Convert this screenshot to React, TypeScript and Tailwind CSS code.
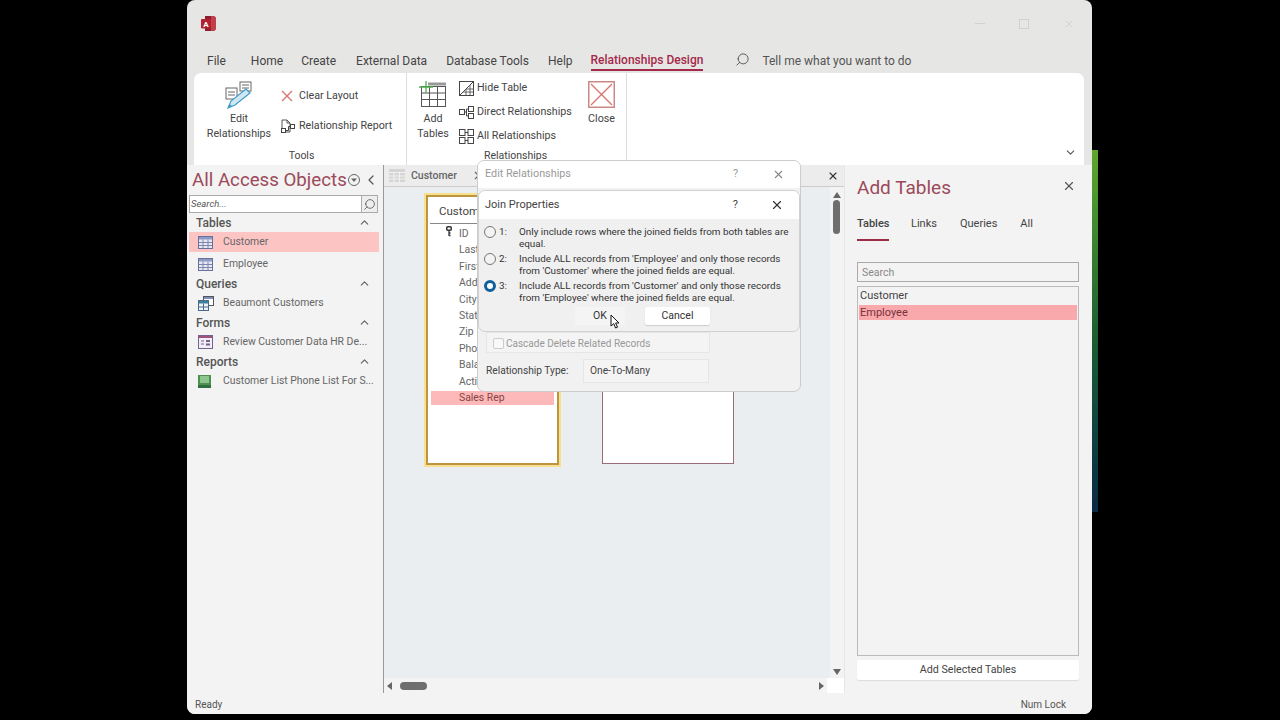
import { ChevronUp, ChevronDown, ChevronLeft, Search, X } from "lucide-react";

const menus = [
  { label: "File", className: "ml-[20px]" },
  { label: "Home", className: "ml-[25px]" },
  { label: "Create", className: "ml-[18px]" },
  { label: "External Data", className: "ml-[20px]" },
  { label: "Database Tools", className: "ml-[19px]" },
  { label: "Help", className: "ml-[19px]" },
];

const fields = ["ID", "Last Name", "First Name", "Address", "City", "State", "Zip", "Phone", "Balance", "Active"];

function AccessLogo() {
  return (
    <svg width="17" height="17" viewBox="0 0 17 17">
      <path d="M5 1h9l2 2v11l-2 2H5z" fill="#8f1d2c" />
      <path d="M11 1h3l2 2v11l-2 2h-3z" fill="#c0404c" />
      <rect x="1" y="4" width="10" height="9.5" rx="1" fill="#b3202f" />
      <text x="6" y="11.5" textAnchor="middle" fontSize="8" fontWeight="700" fill="#fff">A</text>
    </svg>
  );
}

function TableIcon() {
  return (
    <svg width="15" height="13" viewBox="0 0 15 13" fill="none">
      <rect x="0.5" y="0.5" width="14" height="12" fill="#e6e9f4" stroke="#66709a" />
      <rect x="1" y="1" width="13" height="2.5" fill="#8f9ac4" />
      <path d="M5 3.5v9M10 3.5v9M1 6.5h13M1 9.5h13" stroke="#7d87ad" />
    </svg>
  );
}

function QueryIcon() {
  return (
    <svg width="16" height="15" viewBox="0 0 16 15" fill="none">
      <rect x="5.5" y="0.5" width="10" height="9" fill="#fff" stroke="#555" />
      <rect x="6" y="1" width="9" height="2" fill="#7f8fbd" />
      <rect x="0.5" y="4.5" width="10" height="10" fill="#eef1f6" stroke="#4a6a8c" />
      <rect x="1" y="5" width="9" height="2.5" fill="#3f7f9c" />
      <path d="M5.5 7.5v7M1 11h9" stroke="#4a6a8c" />
    </svg>
  );
}

function FormIcon() {
  return (
    <svg width="15" height="14" viewBox="0 0 15 14" fill="none">
      <rect x="0.5" y="0.5" width="14" height="13" fill="#f1eef6" stroke="#76608f" />
      <rect x="1" y="1" width="13" height="2" fill="#a0527a" />
      <path d="M3 6h3M3 9h3" stroke="#76608f" />
      <rect x="8" y="5" width="4" height="2" fill="#76608f" />
      <rect x="8" y="8.5" width="4" height="2" fill="#76608f" />
    </svg>
  );
}

function ReportIcon() {
  return (
    <svg width="13" height="13" viewBox="0 0 13 13">
      <rect width="13" height="13" fill="#4f8f4f" />
      <rect x="2" y="1" width="9" height="7" fill="#8cc68c" />
      <rect x="0" y="10" width="13" height="3" fill="#2f6f3f" />
    </svg>
  );
}

function EditRelationshipsIcon() {
  return (
    <svg width="29" height="28" viewBox="0 0 29 28" fill="none">
      <rect x="1" y="7" width="11" height="11" fill="#fff" stroke="#666" />
      <path d="M3 11h7M3 14h7" stroke="#666" />
      <rect x="15" y="1" width="11" height="9" fill="#fff" stroke="#666" />
      <path d="M17 4h7M17 7h7" stroke="#666" />
      <path d="M3 27l3-7L21 8l4 4L10 24z" fill="#cfe6f3" stroke="#3f9ac8" strokeWidth="1.2" />
      <path d="M3 27l1.5-4 2.5 2z" fill="#3f9ac8" />
    </svg>
  );
}

function ClearLayoutIcon() {
  return (
    <svg width="12" height="12" viewBox="0 0 12 12" fill="none">
      <path d="M1 1l10 10M11 1L1 11" stroke="#d9736f" strokeWidth="1.3" />
    </svg>
  );
}

function ReportSmallIcon() {
  return (
    <svg width="14" height="15" viewBox="0 0 14 15" fill="none">
      <path d="M1 1h5l3 3v9H1z" fill="#fff" stroke="#555" />
      <path d="M6 1v3h3" stroke="#555" />
      <rect x="0.5" y="9.5" width="4" height="4" fill="#fff" stroke="#444" />
      <rect x="9.5" y="5.5" width="4" height="4" fill="#fff" stroke="#444" />
      <path d="M4.5 11.5h3v-4h2" stroke="#444" />
    </svg>
  );
}

function AddTablesIcon() {
  return (
    <svg width="28" height="27" viewBox="0 0 28 27" fill="none">
      <rect x="2.5" y="5.5" width="24" height="20" fill="#fff" stroke="#555" />
      <rect x="9" y="1.5" width="18" height="3" fill="#999" />
      <path d="M2.5 12h24M2.5 18.5h24M10.5 5.5v20M18.5 5.5v20" stroke="#555" />
      <path d="M7 0v12M0 6h14" stroke="#4cae4c" strokeWidth="1.3" />
    </svg>
  );
}

function HideTableIcon() {
  return (
    <svg width="15" height="15" viewBox="0 0 15 15" fill="none">
      <rect x="0.5" y="0.5" width="14" height="14" fill="#fff" stroke="#444" />
      <path d="M1 14L14 1" stroke="#444" />
      <path d="M7 14V8M11 14V4M4 11h10M7 8h7" stroke="#666" />
    </svg>
  );
}

function DirectIcon() {
  return (
    <svg width="15" height="13" viewBox="0 0 15 13" fill="none">
      <rect x="0.5" y="3.5" width="5" height="5" stroke="#444" fill="#fff" />
      <rect x="9.5" y="0.5" width="5" height="5" stroke="#444" fill="#fff" />
      <rect x="9.5" y="7.5" width="5" height="5" stroke="#444" fill="#fff" />
      <path d="M5.5 6h2M7.5 3h2M7.5 10h2M7.5 3v7" stroke="#444" />
    </svg>
  );
}

function AllIcon() {
  return (
    <svg width="15" height="15" viewBox="0 0 15 15" fill="none">
      <rect x="0.5" y="0.5" width="5.5" height="6" stroke="#444" fill="#fff" />
      <rect x="9" y="0.5" width="5.5" height="6" stroke="#444" fill="#fff" />
      <rect x="0.5" y="8.5" width="5.5" height="6" stroke="#444" fill="#fff" />
      <rect x="9" y="8.5" width="5.5" height="6" stroke="#444" fill="#fff" />
      <path d="M6 3.5h3M6 11.5h3" stroke="#444" />
    </svg>
  );
}

function CloseBigIcon() {
  return (
    <svg width="27" height="27" viewBox="0 0 27 27" fill="none">
      <rect x="0.75" y="0.75" width="25.5" height="25.5" fill="#fff" stroke="#c98a86" strokeWidth="1.5" />
      <path d="M3 3l21 21M24 3L3 24" stroke="#d9736f" strokeWidth="1.3" />
    </svg>
  );
}

function KeyIcon() {
  return (
    <svg width="6" height="11" viewBox="0 0 6 11" fill="none">
      <rect x="0.75" y="0.75" width="4.5" height="3.5" rx="1" stroke="#333" strokeWidth="1.5" />
      <path d="M3 4v6M3 7h1.5M3 9.5h1.5" stroke="#333" strokeWidth="1.3" />
    </svg>
  );
}

function Cursor() {
  return (
    <svg width="10" height="15" viewBox="0 0 10 15">
      <path d="M1 1v11l2.7-2.4L5.6 14l1.9-.8-1.9-4.2H9z" fill="#fff" stroke="#111" strokeWidth="1" />
    </svg>
  );
}

function NavHeader({ label }: { label: string }) {
  return (
    <div className="h-[19px] flex items-center justify-between pl-[7px] pr-[8px] text-[12px] font-medium text-[#555]">
      <span>{label}</span>
      <ChevronUp size={13} strokeWidth={2.2} className="text-[#666]" />
    </div>
  );
}

function NavRow({ icon, label, active }: { icon: React.ReactNode; label: string; active?: boolean }) {
  return (
    <div className={`h-[20px] flex items-center pl-[9px] text-[10.4px] text-[#666] whitespace-nowrap ${active ? "bg-[#fdc4c4]" : ""}`}>
      <span className="w-[25px] flex shrink-0">{icon}</span>
      {label}
    </div>
  );
}

function Radio({ checked }: { checked?: boolean }) {
  if (checked) {
    return <span className="w-[12px] h-[12px] rounded-full border-[3px] border-[#0f5f9c] bg-white shrink-0" />;
  }
  return <span className="w-[12px] h-[12px] rounded-full border border-[#777] bg-[#f3f3f3] shrink-0" />;
}

function JoinOption({ n, checked, children }: { n: number; checked?: boolean; children: React.ReactNode }) {
  return (
    <div className="h-[27px] flex pl-[5px] text-[9.9px] leading-[12px] text-[#333]">
      <div className="w-[35px] shrink-0 flex items-start gap-[3px]">
        <Radio checked={checked} />
        <span>{n}:</span>
      </div>
      <div className="whitespace-nowrap">{children}</div>
    </div>
  );
}

function SmallAction({ icon, label }: { icon: React.ReactNode; label: string }) {
  return (
    <div className="h-[24px] flex items-center whitespace-nowrap">
      <span className="w-[18px] flex shrink-0">{icon}</span>
      {label}
    </div>
  );
}

export default function App() {
  return (
    <div
      className="w-[1280px] h-[720px] bg-black overflow-hidden flex items-start pl-[187px] relative text-[#333]"
      style={{ fontFamily: 'Roboto, "Noto Sans", sans-serif' }}
    >
      <div className="w-[905px] h-[714px] bg-[#e6e6e4] rounded-[8px] overflow-hidden flex flex-col relative">
        {/* title bar */}
        <div className="h-[44px] shrink-0 flex items-center justify-between pl-[13px] pr-[17px] pt-[3px]">
          <AccessLogo />
          <div className="flex items-center gap-[34px] text-[#d2d2d0]">
            <span className="w-[10px] h-px bg-[#d2d2d0]" />
            <span className="w-[10px] h-[10px] border border-[#d2d2d0]" />
            <X size={12} />
          </div>
        </div>
        {/* menu */}
        <div className="h-[29px] shrink-0 flex items-start text-[12px] text-[#444] whitespace-nowrap pt-[8px]">
          {menus.map((m) => (
            <span key={m.label} className={m.className}>{m.label}</span>
          ))}
          <span className="ml-[18px] font-medium text-[#a4294a] border-b-2 border-[#a4294a] h-[19px] leading-[16px]">
            Relationships Design
          </span>
          <Search size={15} strokeWidth={1.5} className="ml-[32px] text-[#555] -scale-x-100" />
          <span className="ml-[12px] text-[#555]">Tell me what you want to do</span>
        </div>
        {/* ribbon */}
        <div className="h-[92px] shrink-0 ml-[7px] mr-[8px] bg-white rounded-t-[7px] flex text-[10.7px] text-[#444] relative">
          <div className="w-[213px] border-r border-[#ddd] flex flex-col shrink-0">
            <div className="flex h-[72px]">
              <div className="w-[90px] flex flex-col items-center pt-[8px] leading-[15px] text-center">
                <EditRelationshipsIcon />
                <span className="mt-[2px]">Edit<br />Relationships</span>
              </div>
              <div className="pt-[11px] flex flex-col gap-[6px] -ml-[3px]">
                <SmallAction icon={<ClearLayoutIcon />} label="Clear Layout" />
                <SmallAction icon={<ReportSmallIcon />} label="Relationship Report" />
              </div>
            </div>
            <div className="h-[20px] text-center text-[10.5px] leading-[16px] pl-[3px] pt-[3px]">Tools</div>
          </div>
          <div className="w-[220px] border-r border-[#ddd] flex flex-col shrink-0">
            <div className="flex h-[72px]">
              <div className="w-[52px] flex flex-col items-center pt-[8px] leading-[15px] text-center">
                <AddTablesIcon />
                <span className="mt-[3px]">Add<br />Tables</span>
              </div>
              <div className="pt-[3px] w-[129px]">
                <SmallAction icon={<HideTableIcon />} label="Hide Table" />
                <SmallAction icon={<DirectIcon />} label="Direct Relationships" />
                <SmallAction icon={<AllIcon />} label="All Relationships" />
              </div>
              <div className="flex flex-col items-center pt-[8px] leading-[15px]">
                <CloseBigIcon />
                <span className="mt-[3px]">Close</span>
              </div>
            </div>
            <div className="h-[20px] text-center text-[10.5px] leading-[16px] pr-[2px] pt-[3px]">Relationships</div>
          </div>
          <ChevronDown size={13} strokeWidth={2} className="absolute right-[7px] bottom-[6px] text-[#555]" />
        </div>
        {/* body */}
        <div className="flex-1 flex min-h-0 bg-[#f3f3f3]">
          <div className="w-[197px] shrink-0 border-r border-[#999] pl-[2px] pr-[4px]">
            <div className="h-[30px] flex items-center pl-[3px] whitespace-nowrap">
              <span className="text-[18.7px] text-[#9c4a5a] w-[154px] leading-none">All Access Objects</span>
              <svg width="14" height="14" viewBox="0 0 14 14" fill="none" className="ml-px">
                <circle cx="7" cy="7" r="5.5" stroke="#666" />
                <path d="M4 5.5h6L7 9z" fill="#666" />
              </svg>
              <ChevronLeft size={16} strokeWidth={1.8} className="ml-[2px] text-[#555]" />
            </div>
            <div className="h-[18px] flex border border-[#aaa] bg-white w-[189px]">
              <span className="flex-1 text-[9.5px] italic text-[#555] leading-[16px] pl-px">Search...</span>
              <span className="w-[16px] bg-[#eee] border-l border-[#aaa] flex items-center justify-center">
                <Search size={13} strokeWidth={1.5} className="text-[#555] -scale-x-100" />
              </span>
            </div>
            <NavHeader label="Tables" />
            <NavRow icon={<TableIcon />} label="Customer" active />
            <div className="h-[2px]" />
            <NavRow icon={<TableIcon />} label="Employee" />
            <NavHeader label="Queries" />
            <NavRow icon={<QueryIcon />} label="Beaumont Customers" />
            <NavHeader label="Forms" />
            <NavRow icon={<FormIcon />} label="Review Customer Data HR De..." />
            <NavHeader label="Reports" />
            <NavRow icon={<ReportIcon />} label="Customer List Phone List For S..." />
          </div>
          {/* document area */}
          <div className="w-[460px] shrink-0 flex flex-col">
            <div className="h-[22px] shrink-0 flex items-center bg-[#ececec] border-b border-[#ccc] text-[10.5px] text-[#666] relative">
              <svg width="16" height="13" viewBox="0 0 16 13" className="ml-[5px]">
                <rect width="16" height="13" fill="#d5d5d5" />
                <path d="M0 3.5h16M0 7h16M0 10h16M5 3.5V13M10.5 3.5V13" stroke="#f2f2f2" />
              </svg>
              <span className="ml-[6px] font-medium pt-px">Customer</span>
              <X size={13} className="ml-[15px]" />
              <X size={12} strokeWidth={2.2} className="absolute right-[5px] text-[#333]" />
            </div>
            <div className="flex-1 flex min-h-0">
              <div className="w-[446px] shrink-0 bg-[#eaeef1] relative">
                <div className="absolute left-[42px] top-[8px] w-[133px] h-[270px] bg-white border-2 border-[#bb9540] shadow-[0_0_0_2px_#f9e08f] pt-[3px]">
                  <div className="h-[24px] mx-[2px] pl-[9px] border-b border-[#888] text-[11.5px] leading-[22px] text-[#444]">Customer</div>
                  <div className="pt-[2px] text-[10.4px] text-[#666]">
                    {fields.map((f) => (
                      <div key={f} className="h-[16.4px] pl-[31px] leading-[16px] relative">
                        {f === "ID" && (
                          <span className="absolute left-[18px] top-0"><KeyIcon /></span>
                        )}
                        {f}
                      </div>
                    ))}
                    <div className="h-[14px] mt-px mx-[3px] pl-[28px] bg-[#fdb9b9] leading-[14px] text-[#844]">Sales Rep</div>
                  </div>
                </div>
                <div className="absolute left-[218px] top-[8px] w-[132px] h-[269px] bg-white border border-[#9c6a78]" />
              </div>
              <div className="w-[13px] shrink-0 bg-[#f3f3f3] flex flex-col items-center pt-[5px] pb-[3px]">
                <span className="w-0 h-0 border-x-[4px] border-x-transparent border-b-[6px] border-b-[#666]" />
                <span className="w-[7px] h-[34px] mt-[2px] rounded-full bg-[#6e6e6e]" />
                <span className="flex-1" />
                <span className="w-0 h-0 border-x-[4px] border-x-transparent border-t-[6px] border-t-[#666]" />
              </div>
            </div>
            <div className="h-[15px] shrink-0 flex items-center bg-[#f3f3f3]">
              <span className="ml-[3px] w-0 h-0 border-y-[4px] border-y-transparent border-r-[5px] border-r-[#666]" />
              <span className="ml-[8px] w-[27px] h-[8px] rounded-full bg-[#6e6e6e]" />
              <span className="flex-1" />
              <span className="mr-[3px] w-0 h-0 border-y-[4px] border-y-transparent border-l-[5px] border-l-[#666]" />
              <span className="w-[17px] h-[15px] bg-white" />
            </div>
          </div>
          {/* add tables pane */}
          <div className="flex-1 border-l border-[#e6e6e6] pl-[12px] pr-[13px] flex flex-col relative">
            <div className="h-[47px] flex items-center text-[19px] text-[#9c4a5a]">Add Tables</div>
            <X size={14} strokeWidth={2} className="absolute right-[16px] top-[14px] text-[#555]" />
            <div className="h-[26px] flex items-start text-[11px] text-[#444] pt-[4px]">
              <span className="w-[32px] h-[25px] text-center border-b-2 border-[#9b2d45] font-medium">Tables</span>
              <span className="ml-[22px]">Links</span>
              <span className="ml-[23px]">Queries</span>
              <span className="ml-[23px]">All</span>
            </div>
            <div className="h-[20px] mt-[24px] border border-[#aaa] text-[10.5px] text-[#888] leading-[19px] pl-[4px]">Search</div>
            <div className="h-[370px] mt-[4px] border border-[#bbb] pt-px px-px text-[11px] text-[#444] leading-[15px]">
              <div className="h-[16px] pl-px">Customer</div>
              <div className="h-[15px] mt-px pl-px bg-[#f9a8ac] text-[#7a2f3a]">Employee</div>
            </div>
            <div className="h-[20px] mt-[4px] bg-white rounded-[2px] text-center text-[10.7px] leading-[20px] text-[#444] shadow-[0_1px_1px_#ddd]">
              Add Selected Tables
            </div>
          </div>
        </div>
        {/* status bar */}
        <div className="h-[21px] shrink-0 bg-[#f3f3f3] flex items-center justify-between pl-[8px] pr-[26px] pt-px text-[10px] text-[#555]">
          <span>Ready</span>
          <span>Num Lock</span>
        </div>

        {/* Edit Relationships dialog */}
        <div className="absolute left-[290px] top-[160px] w-[324px] h-[232px] bg-[#f1f1f1] rounded-[7px] border border-[#ccc] overflow-hidden text-[10.2px]">
          <div className="h-[27px] bg-white flex items-center pl-[7px] text-[10.8px] text-[#999]">
            <span className="flex-1">Edit Relationships</span>
            <span className="mr-[34px]">?</span>
            <X size={13} className="mr-[15px] text-[#888]" />
          </div>
          <div className="mt-[144px] ml-[8px] w-[224px] h-[21px] flex items-center bg-[#f4f4f4] border border-[#e6e6e6] text-[#999] text-[10px] pt-px">
            <span className="ml-[6px] mr-[2px] w-[11px] h-[11px] border border-[#ccc] rounded-[2px] bg-[#f8f8f8]" />
            Cascade Delete Related Records
          </div>
          <div className="mt-[6px] ml-[8px] h-[24px] flex items-center text-[#444]">
            <span className="w-[97px]">Relationship Type:</span>
            <span className="w-[126px] h-[24px] pl-[6px] leading-[22px] bg-[#f4f4f4] border border-[#e6e6e6]">One-To-Many</span>
          </div>
        </div>

        {/* Join Properties dialog */}
        <div className="absolute left-[291px] top-[190px] w-[322px] h-[142px] bg-[#f0f0f0] rounded-[7px] border border-[#d0d0d0] overflow-hidden">
          <div className="h-[28px] bg-white flex items-center pl-[6px] text-[11px] text-[#444]">
            <span className="flex-1">Join Properties</span>
            <span className="mr-[32px]">?</span>
            <X size={14} className="mr-[15px] text-[#333]" />
          </div>
          <div className="pt-[7px]">
            <JoinOption n={1}>Only include rows where the joined fields from both tables are<br />equal.</JoinOption>
            <JoinOption n={2}>Include ALL records from 'Employee' and only those records<br />from 'Customer' where the joined fields are equal.</JoinOption>
            <JoinOption n={3} checked>Include ALL records from 'Customer' and only those records<br />from 'Employee' where the joined fields are equal.</JoinOption>
          </div>
          <div className="flex pl-[96px] gap-[20px] text-[10.5px] text-[#333] text-center leading-[18px]">
            <span className="w-[50px] h-[18px] bg-[#f4f4f4]">OK</span>
            <span className="w-[65px] h-[18px] bg-white rounded-[2px] shadow-[0_1px_1px_#ccc]">Cancel</span>
          </div>
        </div>
        <div className="absolute left-[423px] top-[314px]">
          <Cursor />
        </div>
      </div>
      {/* sliver of the desktop behind the window */}
      <div className="absolute left-[1092px] top-[150px] w-[6px] h-[362px] bg-gradient-to-b from-[#5fa82a] via-[#1f5f2f] to-[#0a2a44]" />
    </div>
  );
}
